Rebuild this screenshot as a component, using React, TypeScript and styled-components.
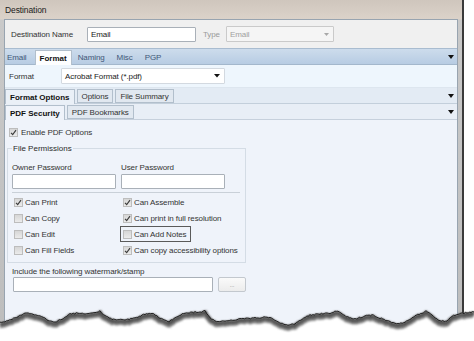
import styled, { createGlobalStyle } from "styled-components";

const GlobalStyle = createGlobalStyle`
  body { margin: 0; background: #fff; }
  * { box-sizing: border-box; }
`;

const Screen = styled.div`
  position: relative;
  width: 474px;
  height: 341px;
  overflow: hidden;
  background: #fff;
  font-family: "Liberation Sans", Arial, sans-serif;
  font-size: 8px;
  letter-spacing: -0.1px;
  color: #333;
`;

const Window = styled.div`
  width: 464px;
  height: 341px;
  display: flex;
  flex-direction: column;
  padding: 0 4px;
  background: linear-gradient(180deg, #cfc6bd 0px, #dbd2c9 19px, #c9c9c9 20px, #bdbdbd 100%);
  border-right: 2px solid #3a3a3a;
`;

const TitleBar = styled.div`
  height: 19px;
  display: flex;
  align-items: center;
  padding-left: 1px;
  font-size: 8.5px;
  color: #1a1a1a;
`;

const Panel = styled.div`
  flex: 1;
  display: flex;
  flex-direction: column;
  background: #f0f0f0;
  border: 1px solid #98a4b0;
  border-bottom: none;
`;

const TopRow = styled.div`
  height: 28px;
  display: flex;
  align-items: center;
  padding-left: 6px;
`;

const FieldLabel = styled.span<{ $w: number; $muted?: boolean; $ml?: number }>`
  width: ${(p) => p.$w}px;
  flex: none;
  margin-left: ${(p) => p.$ml ?? 0}px;
  color: ${(p) => (p.$muted ? "#9a9a9a" : "#333")};
`;

const TextBox = styled.div<{ $w: number }>`
  width: ${(p) => p.$w}px;
  height: 15px;
  flex: none;
  display: flex;
  align-items: center;
  padding-left: 3px;
  background: #fff;
  border: 1px solid #a9b0b8;
  border-radius: 1px;
  color: #222;
`;

const SelectBox = styled.div<{ $w: number; $disabled?: boolean }>`
  width: ${(p) => p.$w}px;
  height: 16px;
  flex: none;
  display: flex;
  align-items: center;
  justify-content: space-between;
  padding: 0 4px 0 3px;
  background: ${(p) => (p.$disabled ? "#f5f5f5" : "#fff")};
  border: 1px solid ${(p) => (p.$disabled ? "#cacaca" : "#d3d9e0")};
  border-radius: 1px;
  color: ${(p) => (p.$disabled ? "#a0a0a0" : "#222")};
`;

const TabStrip = styled.div<{ $bg: string; $line: string; $top?: string }>`
  height: ${(p) => (p.$top ? 17 : 16)}px;
  flex: none;
  display: flex;
  align-items: flex-end;
  gap: 2px;
  padding: 0 3px 0 0;
  background: ${(p) => p.$bg};
  border-top: ${(p) => (p.$top ? `1px solid ${p.$top}` : "none")};
  border-bottom: 1px solid ${(p) => p.$line};
`;

const Tab = styled.div<{ $active?: boolean; $boxed?: boolean; $activeBg?: string; $ml?: number }>`
  height: ${(p) => (p.$active ? 15 : 14)}px;
  display: flex;
  align-items: center;
  padding: 0 4px;
  margin-left: ${(p) => p.$ml ?? 0}px;
  margin-bottom: ${(p) => (p.$active ? -1 : 0)}px;
  font-weight: ${(p) => (p.$active ? 700 : 400)};
  letter-spacing: ${(p) => (p.$active ? "0" : "-0.1px")};
  color: ${(p) => (p.$active ? "#111" : "#333")};
  background: ${(p) => (p.$active ? p.$activeBg ?? "#fff" : p.$boxed ? "#e1e8f0" : "transparent")};
  border: 1px solid ${(p) => (p.$active || p.$boxed ? "#b2bfcc" : "transparent")};
  border-bottom: ${(p) => (p.$active ? "none" : "1px solid #b2bfcc")};
`;

/* top-level tabs: only the selected one has a box */
const PlainTab = styled.div<{ $ml: number }>`
  height: 14px;
  display: flex;
  align-items: center;
  margin-left: ${(p) => p.$ml}px;
  color: #3f5877;
`;

const StripArrow = styled.svg`
  margin-left: auto;
  align-self: center;
  flex: none;
`;

const FormatRow = styled.div`
  height: 23px;
  flex: none;
  display: flex;
  align-items: center;
  padding-left: 2px;
  background: #eef6fd;
  border-bottom: 1px solid #dde6ef;
`;

const Content = styled.div`
  flex: 1;
  display: flex;
  flex-direction: column;
  padding: 8px 0 0 4px;
  background: #eff3fa;
`;

const CheckRow = styled.label<{ $focused?: boolean }>`
  height: 16px;
  display: flex;
  align-items: center;
  gap: 2px;
  padding-left: 2px;
  width: ${(p) => (p.$focused ? "71px" : "auto")};
  border: 1px solid ${(p) => (p.$focused ? "#5a5a5a" : "transparent")};
  margin-left: -1px;
  white-space: nowrap;
`;

const Box = styled.span`
  width: 9px;
  height: 9px;
  flex: none;
  display: flex;
  align-items: center;
  justify-content: center;
  background: linear-gradient(180deg, #d6d6d6, #ebebeb);
  border: 1px solid #bdbdbd;
`;

const EnableRow = styled(CheckRow)`
  height: 9px;
  padding-left: 0;
  margin-left: 0;
  border: none;
  gap: 3px;
`;

const Group = styled.fieldset`
  margin: 7px 0 0 -2px;
  padding: 3px 4px 4px 4px;
  width: 239px;
  min-width: 0;
  border: 1px solid #d4dce5;
`;

const Legend = styled.legend`
  margin-left: 0;
  padding: 0 1px;
  line-height: 9px;
  color: #2a2a2a;
  letter-spacing: 0;
`;

const PasswordGrid = styled.div`
  display: grid;
  grid-template-columns: 104px 104px;
  column-gap: 5px;
  row-gap: 2px;
  margin-top: 7px;
`;

const SmallLabel = styled.span`
  height: 9px;
  line-height: 9px;
`;

const Rule = styled.div`
  height: 1px;
  margin-top: 3px;
  width: 228px;
  background: #c9d0d8;
`;

const CheckGrid = styled.div`
  display: grid;
  grid-template-columns: 109px 1fr;
  grid-auto-rows: 16px;
  padding-top: 1px;
`;

const Watermark = styled.div`
  display: flex;
  flex-direction: column;
  gap: 1px;
  padding: 4px 0 0 3px;
`;

const WatermarkRow = styled.div`
  display: flex;
  gap: 5px;
  padding-left: 1px;
`;

const DotsButton = styled.div`
  width: 28px;
  height: 15px;
  display: flex;
  align-items: center;
  justify-content: center;
  background: linear-gradient(180deg, #fafafa, #ececec);
  border: 1px solid #c3c8ce;
  border-radius: 2px;
  color: #888;
  font-size: 6px;
`;

const TornEdge = styled.svg`
  position: absolute;
  left: 0;
  top: 300px;
`;

function Arrow({ color = "#111", size = 6 }: { color?: string; size?: number }) {
  return (
    <svg width={size} height={size * 0.6} viewBox="0 0 6 3.6">
      <path d="M0 0 L6 0 L3 3.6 Z" fill={color} />
    </svg>
  );
}

function StripMenu() {
  return (
    <StripArrow width="6" height="4" viewBox="0 0 6 4">
      <path d="M0 0 L6 0 L3 4 Z" fill="#111" />
    </StripArrow>
  );
}

function Check({ checked }: { checked?: boolean }) {
  return (
    <Box>
      {checked && (
        <svg width="7" height="7" viewBox="0 0 7 7">
          <path d="M1 3.8 L2.7 5.6 L6 1.2" stroke="#3a3a3a" strokeWidth="1.1" fill="none" />
        </svg>
      )}
    </Box>
  );
}

const EDGE_KEYS: [number, number][] = [
  [0, 22], [8, 21], [15, 18], [25, 13], [33, 14], [40, 16], [48, 20], [55, 22],
  [62, 19], [70, 14], [78, 13], [88, 14], [95, 12], [100, 11], [105, 16], [112, 19],
  [125, 20], [135, 18], [145, 14], [152, 13], [160, 18], [168, 22], [178, 16],
  [185, 13], [195, 12], [200, 12], [205, 11], [210, 18], [218, 22], [228, 21],
  [240, 19], [255, 18], [270, 17], [278, 22], [285, 25], [295, 24], [302, 19],
  [310, 15], [320, 14], [330, 13], [338, 11], [345, 16], [355, 19], [365, 16],
  [372, 15], [380, 18], [390, 22], [398, 24], [405, 22], [415, 16], [422, 13],
  [426, 11], [432, 15], [440, 21], [447, 21], [452, 16], [458, 14], [464, 13], [474, 12],
];

function buildEdge() {
  const pts: string[] = [];
  for (let i = 0; i < EDGE_KEYS.length - 1; i++) {
    const [x0, y0] = EDGE_KEYS[i];
    const [x1, y1] = EDGE_KEYS[i + 1];
    const steps = Math.max(1, Math.round((x1 - x0) / 1.5));
    for (let s = 0; s < steps; s++) {
      const t = s / steps;
      const x = x0 + (x1 - x0) * t;
      const n = Math.sin(x * 12.9898 + 7.1) * 43758.5453;
      const jitter = (n - Math.floor(n) - 0.5) * 1.3;
      pts.push(`${x.toFixed(1)},${(y0 + (y1 - y0) * t + jitter).toFixed(1)}`);
    }
  }
  const [lx, ly] = EDGE_KEYS[EDGE_KEYS.length - 1];
  pts.push(`${lx},${ly}`);
  return pts.join(" ");
}

const EDGE = buildEdge();

const PERMISSIONS = [
  { label: "Can Print", checked: true },
  { label: "Can Assemble", checked: true },
  { label: "Can Copy", checked: false },
  { label: "Can print in full resolution", checked: true },
  { label: "Can Edit", checked: false },
  { label: "Can Add Notes", checked: false, focused: true },
  { label: "Can Fill Fields", checked: false },
  { label: "Can copy accessibility options", checked: true },
];

export default function App() {
  return (
    <Screen>
      <GlobalStyle />
      <Window>
        <TitleBar>Destination</TitleBar>
        <Panel>
          <TopRow>
            <FieldLabel $w={76}>Destination Name</FieldLabel>
            <TextBox $w={109}>Email</TextBox>
            <FieldLabel $w={23} $muted $ml={7}>
              Type
            </FieldLabel>
            <SelectBox $w={108} $disabled>
              <span>Email</span>
              <Arrow color="#a8a8a8" size={5} />
            </SelectBox>
          </TopRow>

          <TabStrip $bg="linear-gradient(180deg, #cddcec, #b7cce3)" $line="#a3b7cc" $top="#a9bcd0">
            <PlainTab $ml={2}>Email</PlainTab>
            <Tab $active $activeBg="#fdfeff" $ml={6}>Format</Tab>
            <PlainTab $ml={4}>Naming</PlainTab>
            <PlainTab $ml={10}>Misc</PlainTab>
            <PlainTab $ml={10}>PGP</PlainTab>
            <StripMenu />
          </TabStrip>

          <FormatRow>
            <FieldLabel $w={54}>&nbsp;Format</FieldLabel>
            <SelectBox $w={164}>
              <span>Acrobat Format (*.pdf)</span>
              <Arrow />
            </SelectBox>
          </FormatRow>

          <TabStrip $bg="#e3ebf4" $line="#c3cfdb">
            <Tab $active $activeBg="#eaf0f7">Format Options</Tab>
            <Tab $boxed>Options</Tab>
            <Tab $boxed>File Summary</Tab>
            <StripMenu />
          </TabStrip>

          <TabStrip $bg="#e8eef6" $line="#c6d0dc">
            <Tab $active $activeBg="#eff3fa">PDF Security</Tab>
            <Tab $boxed>PDF Bookmarks</Tab>
            <StripMenu />
          </TabStrip>

          <Content>
            <EnableRow>
              <Check checked />
              <span>Enable PDF Options</span>
            </EnableRow>

            <Group>
              <Legend>File Permissions</Legend>
              <PasswordGrid>
                <SmallLabel>Owner Password</SmallLabel>
                <SmallLabel>User Password</SmallLabel>
                <TextBox $w={104} />
                <TextBox $w={104} />
              </PasswordGrid>
              <Rule />
              <CheckGrid>
                {PERMISSIONS.map((p) => (
                  <CheckRow key={p.label} $focused={p.focused}>
                    <Check checked={p.checked} />
                    <span>{p.label}</span>
                  </CheckRow>
                ))}
              </CheckGrid>
            </Group>

            <Watermark>
              <SmallLabel>Include the following watermark/stamp</SmallLabel>
              <WatermarkRow>
                <TextBox $w={200} />
                <DotsButton>...</DotsButton>
              </WatermarkRow>
            </Watermark>
          </Content>
        </Panel>
      </Window>

      <TornEdge width="474" height="41" viewBox="0 0 474 41">
        <defs>
          <filter id="soft" x="-5%" y="-50%" width="110%" height="200%">
            <feGaussianBlur stdDeviation="1.3" />
          </filter>
        </defs>
        <polygon points={`0,41 ${EDGE} 474,41`} fill="#fff" />
        <polyline points={EDGE} fill="none" stroke="#777" strokeWidth="5" filter="url(#soft)" transform="translate(0 3)" />
        <polyline points={EDGE} fill="none" stroke="#3c3c3c" strokeWidth="2" filter="url(#soft)" transform="translate(0 1.5)" />
        <polyline points={EDGE} fill="none" stroke="#151515" strokeWidth="0.9" />
      </TornEdge>
    </Screen>
  );
}
